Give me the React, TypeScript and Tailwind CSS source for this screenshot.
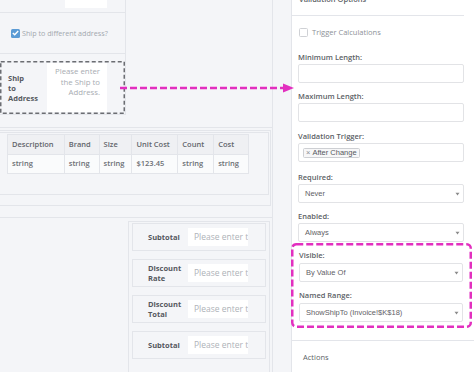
import React from 'react';

const LINE = 'border-[#e3e5ea]';

function Caret() {
  return (
    <svg width="5" height="4" viewBox="0 0 5 4" className="shrink-0">
      <path d="M0.5 0.8 L4.5 0.8 L2.5 3.4 Z" fill="#8a8a8a" />
    </svg>
  );
}

function FieldLabel({ children }: { children: React.ReactNode }) {
  return <div className="h-[12px] leading-[12px] text-[7.5px] font-semibold text-[#5c5f66]">{children}</div>;
}

function TextBox({ mt = 'mt-[1px]' }: { mt?: string }) {
  return <div className={`${mt} h-[19px] bg-white border border-[#e2e3e6] rounded-[2px]`} />;
}

function SelectBox({ value, mt = 'mt-[1px]' }: { value: string; mt?: string }) {
  return (
    <div className={`${mt} h-[19px] bg-white border border-[#e2e3e6] rounded-[2px] flex items-center justify-between pl-[6px] pr-[3px] font-['Liberation_Sans',sans-serif] text-[7.5px] text-[#5f6166]`}>
      <span>{value}</span>
      <Caret />
    </div>
  );
}

const COLUMNS = [
  { name: 'Description', w: 'w-[57px]', value: 'string' },
  { name: 'Brand', w: 'w-[35px]', value: 'string' },
  { name: 'Size', w: 'w-[33px]', value: 'string' },
  { name: 'Unit Cost', w: 'w-[46px]', value: '$123.45' },
  { name: 'Count', w: 'w-[36px]', value: 'string' },
  { name: 'Cost', w: 'w-[35px]', value: 'string' },
];

const TOTALS = [['Subtotal'], ['Discount', 'Rate'], ['Discount', 'Total'], ['Subtotal']];

export default function App() {
  return (
    <div className="relative w-[474px] h-[372px] overflow-hidden bg-[#f4f5f8] flex font-['Open_Sans',sans-serif]">
      {/* Left: invoice form */}
      <div className={`w-[273px] h-full shrink-0 border-r ${LINE} flex flex-col`}>
        {/* Shipping card */}
        <div className={`w-[126px] h-[125px] border-r border-b ${LINE} flex flex-col`}>
          <div className={`h-[13px] border-b ${LINE}`}>
            <div className="ml-[65px] w-[42px] h-[8px] bg-white" />
          </div>
          <div className={`h-[41px] border-b ${LINE} flex items-center pl-[11px]`}>
            <span className="w-[9px] h-[9px] rounded-[1.5px] bg-[#5b9bd5] flex items-center justify-center">
              <svg width="7" height="6" viewBox="0 0 7 6">
                <path d="M0.8 3 L2.7 4.8 L6.2 1" fill="none" stroke="white" strokeWidth="1.4" />
              </svg>
            </span>
            <span className="ml-[2px] text-[7.2px] text-[#a3a8ae]">Ship to different address?</span>
          </div>
          <div className="relative mt-[7px] h-[53px] w-[125px] flex">
            <div className="w-[47px] pl-[8px] flex items-center text-[7.5px] leading-[10px] font-bold text-[#55585e]">
              <div>
                Ship
                <br />
                to
                <br />
                Address
              </div>
            </div>
            <div className="my-[2px] w-[60px] bg-white pr-[7px] pt-[3px] text-right text-[7.8px] leading-[10.5px] text-[#a8acb2]">
              Please enter the Ship to Address.
            </div>
            <svg width="125" height="53" className="absolute inset-0 pointer-events-none">
              <rect x="0.75" y="0.75" width="123.5" height="51.5" fill="none" stroke="#6b6d72" strokeWidth="1.5" strokeDasharray="4 2.5" />
            </svg>
          </div>
        </div>

        {/* Line items */}
        <div className={`mt-[12px] border-t ${LINE}`}>
          <div className={`mt-[2px] w-[271px] border-t border-r border-b ${LINE} pt-[1px] pr-[1px] pb-[10px]`}>
            <div className={`border-t border-r border-b ${LINE} pt-[1px] pl-[7px] pb-[20px]`}>
              <div className={`w-[242px] border-l border-t ${LINE} text-[7.5px]`}>
                <div className="flex h-[20px] bg-[#eff0f3]">
                  {COLUMNS.map(c => (
                    <div key={c.name} className={`${c.w} border-r border-b ${LINE} pl-[4px] flex items-center font-semibold text-[#62656b]`}>
                      {c.name}
                    </div>
                  ))}
                </div>
                <div className="flex h-[19px] bg-[#fafbfc]">
                  {COLUMNS.map(c => (
                    <div key={c.name} className={`${c.w} border-r border-b ${LINE} pl-[4px] flex items-center font-semibold text-[#6c6f75]`}>
                      {c.value}
                    </div>
                  ))}
                </div>
              </div>
            </div>
          </div>
        </div>

        {/* Totals */}
        <div className={`mt-[11px] flex-1 border-t ${LINE}`}>
          <div className={`ml-[128px] mt-[3px] w-[142px] h-[200px] border-l border-t border-r ${LINE} pt-[1px] px-[3px] flex flex-col gap-[8px]`}>
            {TOTALS.map((lines, i) => (
              <div key={i} className={`h-[28px] shrink-0 border ${LINE} flex items-center pl-[15px]`}>
                <div className="w-[40px] text-[7.5px] leading-[10px] font-bold text-[#55585e]">
                  {lines.map((l, j) => (
                    <div key={j}>{l}</div>
                  ))}
                </div>
                <div className="w-[60px] h-[18px] bg-white pl-[6px] overflow-hidden whitespace-nowrap flex items-center text-[8.5px] text-[#aeb2b8]">
                  Please enter t
                </div>
              </div>
            ))}
          </div>
        </div>
      </div>

      {/* Right: validation options panel */}
      <div className={`ml-[18px] w-[183px] h-full shrink-0 bg-white border-l ${LINE} pl-[6px] pr-[10px] flex flex-col`}>
        <div className={`-ml-[6px] pl-[7px] h-[16px] shrink-0 border-b ${LINE} overflow-hidden`}>
          <div className="-mt-[6px] leading-[10px] text-[7.5px] font-semibold text-[#5c5f66]">Validation Options</div>
        </div>

        <div className="mt-[12px] h-[9px] flex items-center pl-[1px]">
          <span className="w-[9px] h-[9px] rounded-[1.5px] border border-[#cfd1d5] bg-white" />
          <span className="ml-[4px] text-[7.5px] text-[#8d9197]">Trigger Calculations</span>
        </div>

        <div className="mt-[14px]">
          <FieldLabel>Minimum Length:</FieldLabel>
          <TextBox />
        </div>
        <div className="mt-[7px]">
          <FieldLabel>Maximum Length:</FieldLabel>
          <TextBox />
        </div>
        <div className="mt-[8px]">
          <FieldLabel>Validation Trigger:</FieldLabel>
          <div className="mt-[1px] h-[19px] bg-white border border-[#e2e3e6] rounded-[2px] flex items-center pl-[4px]">
            <span className="h-[10px] px-[2px] border border-[#cdcfd3] bg-[#f7f7f8] rounded-[1.5px] flex items-center font-['Liberation_Sans',sans-serif] text-[7.5px] text-[#55585e]">
              <span className="text-[#8a8d92] mr-[2px]">×</span>After Change
            </span>
          </div>
        </div>
        <div className="mt-[9px]">
          <FieldLabel>Required:</FieldLabel>
          <SelectBox value="Never" />
        </div>
        <div className="mt-[7px]">
          <FieldLabel>Enabled:</FieldLabel>
          <SelectBox value="Always" />
        </div>

        {/* Highlighted visibility rule */}
        <div className="relative mt-[1px] -ml-[7px] -mr-[8px] h-[85px] pt-[6px] pl-[8px] pr-[9px]">
          <FieldLabel>Visible:</FieldLabel>
          <SelectBox value="By Value Of" mt="mt-[2px]" />
          <div className="mt-[7px]">
            <FieldLabel>Named Range:</FieldLabel>
            <SelectBox value="ShowShipTo (Invoice!$K$18)" mt="mt-[2px]" />
          </div>
          <svg width="181" height="85" className="absolute inset-0 pointer-events-none">
            <rect x="1.25" y="1.25" width="178.5" height="82.5" rx="4" fill="none" stroke="#e22fbf" strokeWidth="2.5" strokeDasharray="7 3" />
          </svg>
        </div>

        <div className={`mt-[12px] -ml-[6px] -mr-[10px] flex-1 border-t ${LINE} pt-[10px] pl-[11px]`}>
          <div className="leading-[12px] text-[7.5px] text-[#5c5f66]">Actions</div>
        </div>
      </div>

      {/* Annotation arrow */}
      <svg width="474" height="372" className="absolute inset-0 pointer-events-none">
        <line x1="120" y1="88" x2="284" y2="88" stroke="#e22fbf" strokeWidth="2.5" strokeDasharray="7 3" />
        <polygon points="283,83.5 294,88 283,92.5" fill="#e22fbf" />
      </svg>
    </div>
  );
}
